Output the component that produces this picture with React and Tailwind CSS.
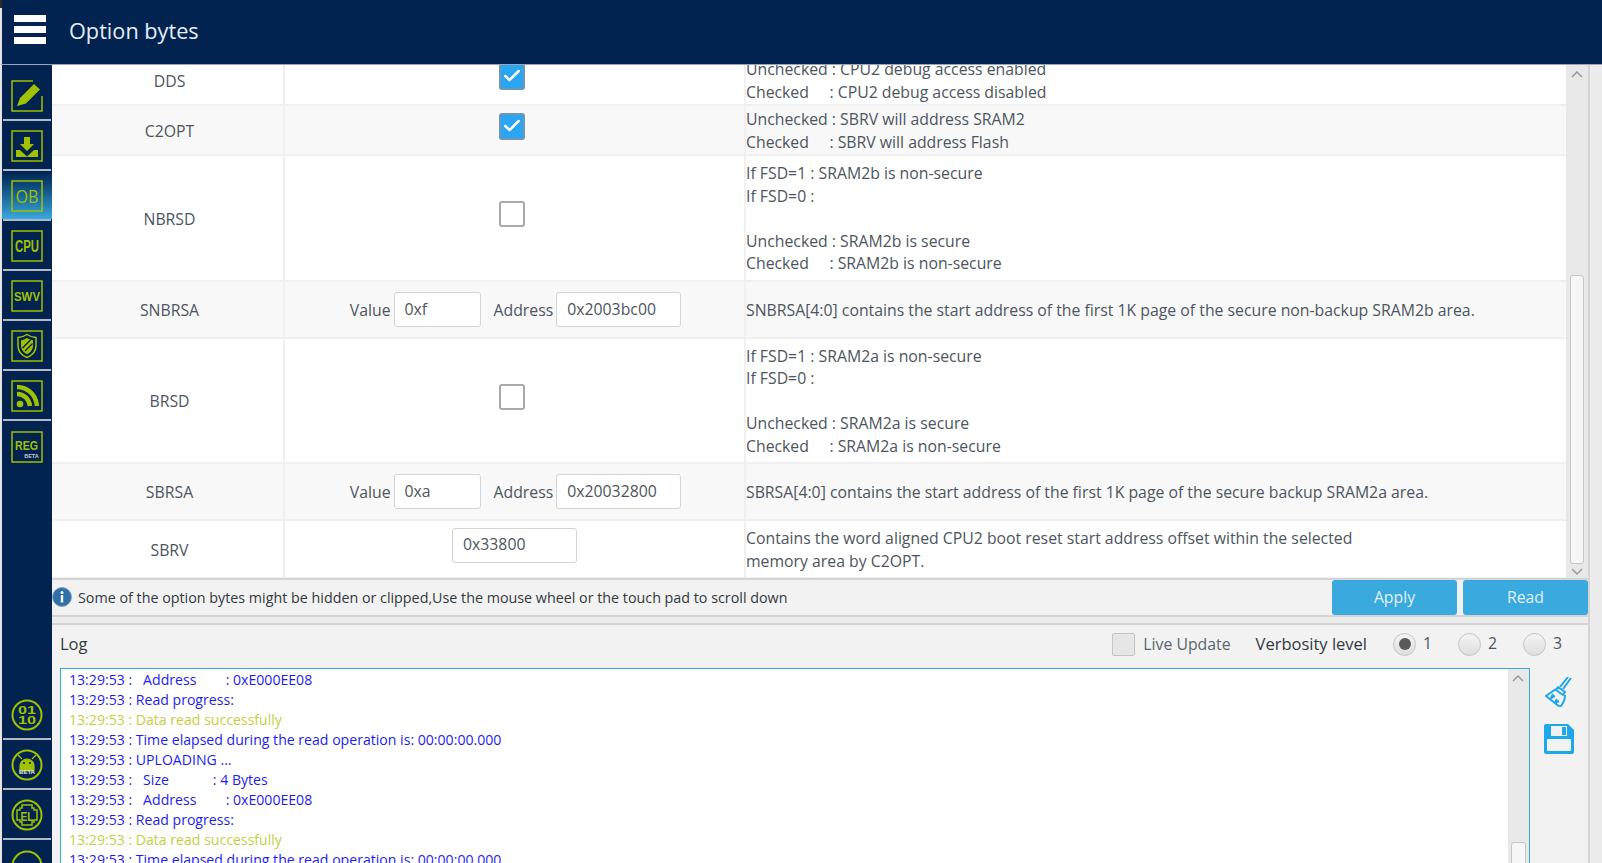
import { Check } from "lucide-react";

const FONT = "font-['Open_Sans','Noto_Sans',sans-serif]";

const rows = [
  { name: "DDS", h: "h-[50px] -mt-[9px]", control: "on", lines: ["Unchecked : CPU2 debug access enabled", "Checked     : CPU2 debug access disabled"] },
  { name: "C2OPT", h: "h-[50px]", control: "on", alt: true, lines: ["Unchecked : SBRV will address SRAM2", "Checked     : SBRV will address Flash"] },
  { name: "NBRSD", h: "h-[126px]", control: "off", lines: ["If FSD=1 : SRAM2b is non-secure", "If FSD=0 :", "\u00a0", "Unchecked : SRAM2b is secure", "Checked     : SRAM2b is non-secure"] },
  { name: "SNBRSA", h: "h-[57px]", control: "pair", alt: true, value: "0xf", address: "0x2003bc00", lines: ["SNBRSA[4:0] contains the start address of the first 1K page of the secure non-backup SRAM2b area."] },
  { name: "BRSD", h: "h-[125px]", control: "off", lines: ["If FSD=1 : SRAM2a is non-secure", "If FSD=0 :", "\u00a0", "Unchecked : SRAM2a is secure", "Checked     : SRAM2a is non-secure"] },
  { name: "SBRSA", h: "h-[57px]", control: "pair", alt: true, value: "0xa", address: "0x20032800", lines: ["SBRSA[4:0] contains the start address of the first 1K page of the secure backup SRAM2a area."] },
  { name: "SBRV", h: "h-[58px]", control: "single", value: "0x33800", lines: ["Contains the word aligned CPU2 boot reset start address offset within the selected", "memory area by C2OPT."] },
];

const log = [
  ["13:29:53 :   Address        : 0xE000EE08"],
  ["13:29:53 : Read progress:"],
  ["13:29:53 : Data read successfully", true],
  ["13:29:53 : Time elapsed during the read operation is: 00:00:00.000"],
  ["13:29:53 : UPLOADING ..."],
  ["13:29:53 :   Size            : 4 Bytes"],
  ["13:29:53 :   Address        : 0xE000EE08"],
  ["13:29:53 : Read progress:"],
  ["13:29:53 : Data read successfully", true],
  ["13:29:53 : Time elapsed during the read operation is: 00:00:00.000"],
];

function Frame({ children }) {
  return <svg viewBox="0 0 32 32" className="w-8 h-8" fill="none" stroke="#a0c000" strokeWidth="1.5">{children}</svg>;
}

function Circle({ children }) {
  return (
    <svg viewBox="0 0 32 32" className="w-8 h-8" fill="none" stroke="#a0c000" strokeWidth="2">
      <circle cx="16" cy="16" r="14.5" />
      {children}
    </svg>
  );
}

function NavItem({ active, children }) {
  return (
    <div className="h-[50px] shrink-0 flex flex-col">
      <div className={`flex-1 flex items-center justify-center pt-[2px] ${active ? "bg-gradient-to-b from-[#022350] to-[#39a9de]" : ""}`}>
        {children}
      </div>
      <div className="h-[2px] mx-[1px] bg-[#b4bac4]" />
    </div>
  );
}

function TextIcon({ label, size, y, width, weight = 700, font = "Liberation Sans" }) {
  return (
    <Frame>
      <rect x="1" y="1" width="30" height="30" />
      <text x="16" y={y} textAnchor="middle" fill="#a0c000" stroke="none" fontSize={size} fontWeight={weight} fontFamily={font} textLength={width} lengthAdjust="spacingAndGlyphs">{label}</text>
    </Frame>
  );
}

function Sidebar() {
  return (
    <aside className="w-[52px] shrink-0 h-full flex flex-col bg-[#022350] border-l-2 border-[#e4e4e4] pt-[6px] overflow-hidden">
      <NavItem>
        <Frame>
          <path d="M22 1H1v30h30V16" />
          <path d="M6 26l3-8L23 4l6 5.500-14 14z" fill="#a0c000" stroke="none" />
        </Frame>
      </NavItem>
      <NavItem>
        <Frame>
          <rect x="1" y="1" width="30" height="30" />
          <path d="M13 7h6v7h4l-7 7-7-7h4zM5 20h4l7 6.500 7-6.500h4v7H5z" fill="#a0c000" stroke="none" />
        </Frame>
      </NavItem>
      <NavItem active><TextIcon label="OB" size={18} y={22.500} width={23} weight={400} font="Open Sans" /></NavItem>
      <NavItem><TextIcon label="CPU" size={16} y={22} width={24} /></NavItem>
      <NavItem><TextIcon label="SWV" size={12.500} y={20.500} width={26} /></NavItem>
      <NavItem>
        <Frame>
          <rect x="1" y="1" width="30" height="30" />
          <path d="M16 4.500c3 2 6 3 9 3v8c0 6-4 10-9 12-5-2-9-6-9-12v-8c3 0 6-1 9-3z" />
          <path d="M16 8c2 1.300 4 2 6 2.200v5.300c0 4-2.500 7-6 8.800-3.500-1.800-6-4.800-6-8.800v-5.300c2-.2 4-.9 6-2.200z" fill="#a0c000" stroke="none" />
          <path d="M11.500 18l8-8M14 21l7.500-7.500" stroke="#022350" strokeWidth="1.300" />
        </Frame>
      </NavItem>
      <NavItem>
        <Frame>
          <rect x="1" y="1" width="30" height="30" />
          <circle cx="9" cy="24" r="3.300" fill="#a0c000" stroke="none" />
          <path d="M6 14c7 0 12 5 13 12M6 7c11 0 19 8 20 19" strokeWidth="4.500" />
        </Frame>
      </NavItem>
      <div className="h-[50px] shrink-0 flex items-center justify-center pt-[2px]">
        <Frame>
          <rect x="1" y="1" width="30" height="30" />
          <text x="15.500" y="19" textAnchor="middle" fill="#a0c000" stroke="none" fontSize="12.500" fontWeight="700" fontFamily="Liberation Sans" textLength="23" lengthAdjust="spacingAndGlyphs">REG</text>
          <text x="20.500" y="27" textAnchor="middle" fill="#c8ccd4" stroke="none" fontSize="5.500" fontWeight="700" fontFamily="Liberation Sans">BETA</text>
        </Frame>
      </div>
      <div className="flex-1 min-h-0" />
      <NavItem>
        <Circle>
          <text x="16" y="15" textAnchor="middle" fill="#a0c000" stroke="none" fontSize="11" fontWeight="700" fontFamily="Liberation Sans" textLength="18" lengthAdjust="spacingAndGlyphs">01</text>
          <text x="16" y="25" textAnchor="middle" fill="#a0c000" stroke="none" fontSize="11" fontWeight="700" fontFamily="Liberation Sans" textLength="18" lengthAdjust="spacingAndGlyphs">10</text>
        </Circle>
      </NavItem>
      <NavItem>
        <Circle>
          <path d="M9 17a7 7 0 0 1 14 0v5H9zM11 10L7 6M21 10l4-4" fill="#a0c000" stroke="#a0c000" strokeWidth="1.200" />
          <circle cx="13" cy="14" r="1" fill="#022350" stroke="none" />
          <circle cx="19" cy="14" r="1" fill="#022350" stroke="none" />
          <text x="16" y="25" textAnchor="middle" fill="#dfe3e8" stroke="none" fontSize="6" fontWeight="700" fontFamily="Liberation Sans">BETA</text>
        </Circle>
      </NavItem>
      <NavItem>
        <Circle>
          <path d="M11 6h10v3h2v2h3v10h-3v2h-2v3H11v-3H9v-2H6V11h3V9h2z" strokeWidth="1.500" />
          <text x="16" y="21.500" textAnchor="middle" fill="#a0c000" stroke="none" fontSize="13" fontWeight="700" fontFamily="Liberation Sans" textLength="13" lengthAdjust="spacingAndGlyphs">EL</text>
        </Circle>
      </NavItem>
      <div className="h-[23px] shrink-0 flex justify-center pt-[10px]">
        <Circle />
      </div>
    </aside>
  );
}

function Checkbox({ checked }) {
  return (
    <div className="-mt-2 -ml-[6px]">
      {checked ? (
        <div className="w-[26px] h-[27px] rounded-[3px] bg-[#2aa5f4] border-2 border-[#6f97b3] flex items-center justify-center">
          <Check className="w-5 h-5 text-white" strokeWidth={3} />
        </div>
      ) : (
        <div className="w-[26px] h-[26px] rounded-[3px] bg-white border-2 border-[#a9a9a9]" />
      )}
    </div>
  );
}

function Field({ value, width }) {
  return (
    <div className={`${width} h-[35px] bg-white border border-[#d4d4d4] rounded-[3px] pl-[10px] flex items-center text-[#4d5560]`}>
      {value}
    </div>
  );
}

function Row({ row }) {
  const single = row.lines.length === 1;
  return (
    <div className={`${row.h} shrink-0 flex border-b-2 border-[#f0f0f0] ${row.alt ? "bg-[#f8f8f8]" : "bg-white"}`}>
      <div className="w-[233px] shrink-0 border-r-2 border-[#f0f0f0] flex items-center justify-center pt-[3px] pl-[4px] text-[#4d5560]">{row.name}</div>
      <div className="w-[461px] shrink-0 border-r-2 border-[#f0f0f0] flex items-center justify-center text-[#4d5560]">
        {row.control === "on" && <Checkbox checked />}
        {row.control === "off" && <Checkbox />}
        {row.control === "pair" && (
          <div className="flex items-center pl-[2px]">
            <span className="mr-[3px] pt-[2px]">Value</span>
            <Field value={row.value} width="w-[87px]" />
            <span className="ml-[13px] mr-[3px] pt-[2px]">Address</span>
            <Field value={row.address} width="w-[125px]" />
          </div>
        )}
        {row.control === "single" && <div className="-mt-2"><Field value={row.value} width="w-[125px]" /></div>}
      </div>
      <div className={`flex-1 min-w-0 flex flex-col justify-center whitespace-pre leading-[22.500px] text-[#4d5560] ${single ? "pt-[2px]" : "pt-[1px]"}`}>
        {row.lines.map((line, i) => <div key={i}>{line}</div>)}
      </div>
    </div>
  );
}

function Radio({ label, on }) {
  return (
    <div className="w-[65px] shrink-0 flex items-center gap-[7px]">
      <div className="w-[23px] h-[23px] rounded-full bg-gradient-to-b from-[#f4f4f4] to-[#dedede] border border-[#c4c4c4] flex items-center justify-center">
        {on && <div className="w-[12px] h-[12px] rounded-full bg-[#5a5a5a]" />}
      </div>
      <span className="text-[#4d5560]">{label}</span>
    </div>
  );
}

function Scrollbar({ children, className }) {
  return <div className={`relative bg-[#e8e8e8] ${className}`}>{children}</div>;
}

function Chevron({ up, className }) {
  return (
    <svg viewBox="0 0 12 7" className={`w-3 h-[7px] ${className}`} fill="none" stroke="#9a9a9a" strokeWidth="1.500">
      <path d={up ? "M1 6l5-5 5 5" : "M1 1l5 5 5-5"} />
    </svg>
  );
}

export default function App() {
  return (
    <div className={`${FONT} relative w-[1602px] h-[863px] overflow-hidden flex flex-col bg-[#f2f2f2] text-[15.800px]`}>
      <div className="absolute left-0 top-0 w-[2px] h-[8px] bg-[#2b2b2b]" />
      <header className="h-[65px] shrink-0 flex items-center bg-[#022350] border-b border-[#9aa4b2] border-l-2 border-l-[#e4e4e4]">
        <div className="w-[32px] ml-[12px] mb-[6px] flex flex-col gap-[4px]">
          <div className="h-[7px] bg-white" />
          <div className="h-[7px] bg-white" />
          <div className="h-[7px] bg-white" />
        </div>
        <h1 className="ml-[23px] pb-[2px] text-[21.700px] text-[#e6edf5] font-normal">Option bytes</h1>
      </header>
      <div className="flex-1 min-h-0 flex">
        <Sidebar />
        <main className="w-[1538px] shrink-0 flex flex-col border-r-2 border-[#d4d4d4]">
          <div className="h-[515px] shrink-0 flex border-b-2 border-[#d4d4d4]">
            <div className="w-[1514px] shrink-0 flex flex-col overflow-hidden">
              {rows.map((row) => <Row key={row.name} row={row} />)}
            </div>
            <Scrollbar className="flex-1">
              <Chevron up className="absolute left-[5px] top-[6px]" />
              <div className="absolute left-[4px] right-[4px] top-[210px] bottom-[14px] bg-[#f6f6f6] border border-[#c6c6c6] rounded-[3px]" />
              <Chevron className="absolute left-[5px] bottom-[3px]" />
            </Scrollbar>
          </div>
          <div className="h-[37px] shrink-0 flex border-b-2 border-[#d4d4d4]">
            <svg viewBox="0 0 20 20" className="w-5 h-5 mt-[7px]">
              <circle cx="10" cy="10" r="9.500" fill="#2f6fa8" stroke="#8aa4bc" strokeWidth="1" />
              <circle cx="10" cy="5.500" r="1.500" fill="#fff" />
              <rect x="8.800" y="8" width="2.400" height="7.500" fill="#fff" />
            </svg>
            <span className="ml-[6px] pt-[7px] text-[14.300px] text-[#33393f]">Some of the option bytes might be hidden or clipped,Use the mouse wheel or the touch pad to scroll down</span>
            <div className="ml-auto flex gap-[6px]">
              <button className="w-[125px] h-[35px] rounded-[3px] pt-[1px] bg-[#39a9de] text-[#e2f2fb]">Apply</button>
              <button className="w-[125px] h-[35px] rounded-[3px] pt-[1px] bg-[#39a9de] text-[#e2f2fb]">Read</button>
            </div>
          </div>
          <div className="h-[8px] shrink-0 bg-[#ececec] border-b-2 border-[#d4d4d4]" />
          <div className="h-[43px] shrink-0 flex items-center pl-[8px] pb-[5px]">
            <span className="text-[16.500px] text-[#33393f]">Log</span>
            <div className="ml-auto flex items-center">
              <div className="w-[23px] h-[23px] rounded-[2px] bg-[#e6e6e6] border border-[#c4c4c4]" />
              <span className="ml-[8px] pt-[2px] text-[#5a6670]">Live Update</span>
              <span className="ml-[25px] mr-[26px] text-[16.500px] text-[#33393f]">Verbosity level</span>
              <div className="flex">
                <Radio label="1" on />
                <Radio label="2" />
                <Radio label="3" />
              </div>
            </div>
          </div>
          <div className="flex-1 min-h-0 flex pl-[8px]">
            <div className="w-[1470px] shrink-0 h-[250px] bg-white border border-[#39a9de] flex overflow-hidden">
              <div className="flex-1 min-w-0 pl-[8px] pt-[1px] text-[14.100px] leading-[20px] whitespace-pre">
                {log.map(([text, ok], i) => (
                  <div key={i} className={ok ? "text-[#c5cf3f]" : "text-[#1d1df0]"}>{text}</div>
                ))}
              </div>
              <Scrollbar className="w-[21px] shrink-0">
                <Chevron up className="absolute left-1 top-[6px]" />
                <div className="absolute left-[3px] right-[3px] top-[173px] bottom-0 bg-[#f6f6f6] border border-[#c6c6c6] rounded-[3px]" />
              </Scrollbar>
            </div>
            <div className="flex-1 flex flex-col items-center pt-[9px] gap-[16px]">
              <svg viewBox="0 0 28 30" className="w-[28px] h-[30px]" fill="none" stroke="#1ea8ea" strokeWidth="2" strokeLinejoin="round">
                <path d="M26 1l-8 11M23 0l-8 10" />
                <path d="M13 10l7 5-2 3-7-5z" />
                <path d="M11 12L1 19l14 11c3-3 5-7 5-12" />
                <path d="M8 17l-2 4 4-2M12 22l-2 4 4-2" />
              </svg>
              <svg viewBox="0 0 32 32" className="w-8 h-8">
                <path d="M1 3a2 2 0 0 1 2-2h22l6 6v22a2 2 0 0 1-2 2H3a2 2 0 0 1-2-2z" fill="#1ea8ea" />
                <rect x="8" y="3" width="16" height="10" fill="#f2f2f2" />
                <rect x="19" y="4" width="4" height="8" fill="#1ea8ea" />
                <rect x="4" y="16" width="24" height="12" rx="1" fill="#f2f2f2" />
              </svg>
            </div>
          </div>
        </main>
        <div className="flex-1 bg-[#ececec]" />
      </div>
    </div>
  );
}
